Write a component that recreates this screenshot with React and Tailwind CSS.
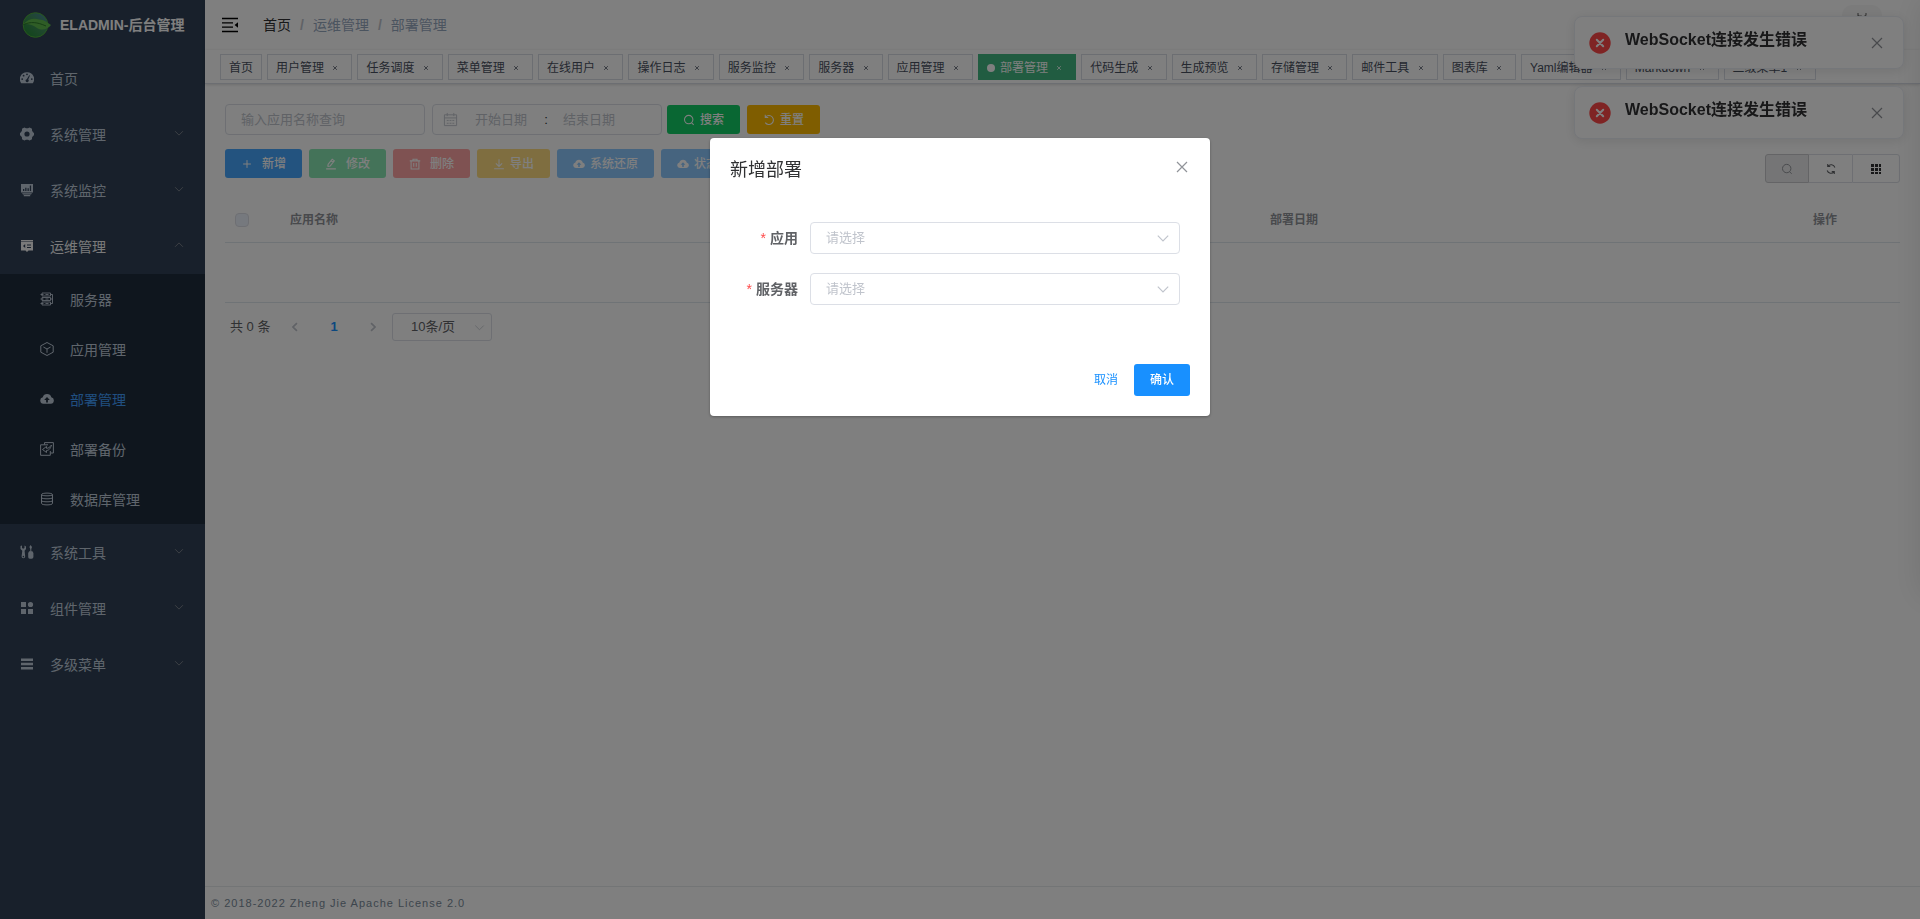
import React, { useState } from 'react';
import { Plus } from 'lucide-react';

const LogoIcon = () => (
  <svg viewBox="0 0 30 28" className="w-[30px] h-7 shrink-0">
    <defs>
      <linearGradient id="logo" x1="0" y1="1" x2="1" y2="0">
        <stop offset="0" stopColor="#1f8a2e" />
        <stop offset="0.55" stopColor="#3f8f5c" />
        <stop offset="1" stopColor="#4a86a8" />
      </linearGradient>
    </defs>
    <circle cx="13.5" cy="14" r="12.3" fill="url(#logo)" stroke="#4fae3a" strokeWidth="1" />
    <path d="M1.5 13C6 8 12 6.5 17 8.5C22 8.5 25 11.5 29 14C25.5 18.5 20 20 15 17C11 13.5 6 12.5 1.5 13Z" fill="#5fba4c" />
    <path d="M1.5 13.5C9 10.5 15 11 24 15" fill="none" stroke="#2d7d2b" strokeWidth="1" />
  </svg>
);

const HamburgerIcon = () => (
  <svg viewBox="0 0 16 16" className="w-4 h-4">
    <path d="M0 1.5h16M0 5.8h11M0 10.2h11M0 14.5h16" stroke="#000" strokeWidth="1.3" />
    <path d="M16 5.2v5.6L12.6 8z" fill="#000" />
  </svg>
);

// thin line icons on a 16px grid, coloured by the text colour
const linePaths = {
  down: 'M2.8 5.6L8 10.8L13.2 5.6',
  up: 'M2.8 10.4L8 5.2L13.2 10.4',
  left: 'M10.2 3.5L5.7 8L10.2 12.5',
  right: 'M5.8 3.5L10.3 8L5.8 12.5',
  close: 'M3 3L13 13M13 3L3 13',
  search: 'M7.6 1.8a5.6 5.6 0 1 0 0 11.2a5.6 5.6 0 1 0 0-11.2M11.4 11.6L14.2 14.4',
  edit: 'M3.6 11.4L4.2 8.4L9.6 1.6L12.4 3.8L7 10.6L3.6 11.4M8.2 3.6L10.9 5.7M1.5 14.5H14.5',
  trash: 'M1 3.8h14M5.3 3.6v-2h5.4v2M2.8 4v10.6h10.4V4M6.3 6.8v5M9.7 6.8v5',
  download: 'M8 1.5V11M3.8 7.2L8 11.2L12.2 7.2M1.5 14.2H14.5',
  reset: 'M3.6 3.8A6 6 0 1 1 3 11.5M3 1v3.6H7',
  refresh: 'M13.2 6A5.6 5.6 0 0 0 3.8 4.2M2.8 10A5.6 5.6 0 0 0 12.2 11.8M3.6 1.2v3.3H7M12.4 14.8v-3.3H9',
  calendar: 'M1.5 3h13v11.5h-13zM1.5 6.3h13M4.5 1v3.4M11.5 1v3.4M4 9h2M7 9h2M10 9h2M4 12h2M7 12h2M10 12h2',
};

const LineIcon = ({ name, width = 1, className = 'w-4 h-4' }) => (
  <svg viewBox="0 0 16 16" className={`shrink-0 ${className}`} fill="none" stroke="currentColor" strokeWidth={width}>
    <path d={linePaths[name]} />
  </svg>
);

const CloudIcon = ({ className }) => (
  <svg viewBox="0 0 14 14" className={className}>
    <path
      fill="currentColor"
      fillRule="evenodd"
      d="M11.3 5.2A4.4 4.4 0 0 0 2.8 5.2A3.3 3.3 0 0 0 3.3 11.7H10.8A3.3 3.3 0 0 0 11.3 5.2ZM7 5L9.8 7.9H7.9V10.4H6.1V7.9H4.2Z"
    />
  </svg>
);

const GridIcon = () => (
  <svg viewBox="0 0 12 12" className="w-3 h-3" fill="currentColor">
    <path d="M1 1h3v3H1zM5 1h3v3H5zM9 1h2v3H9zM1 5h3v3H1zM5 5h3v3H5zM9 5h2v3H9zM1 9h3v2H1zM5 9h3v2H5zM9 9h2v2H9z" />
  </svg>
);

const menuIcons = {
  home: <path fillRule="evenodd" d="M7 1.2A6.9 6.9 0 0 0 1.2 12.2H12.8A6.9 6.9 0 0 0 7 1.2ZM7 2.4a.9.9 0 1 1 0 1.8a.9.9 0 0 1 0-1.8ZM3.6 3.8a.9.9 0 1 1 0 1.8a.9.9 0 0 1 0-1.8ZM2.2 7.2a.9.9 0 1 1 0 1.8a.9.9 0 0 1 0-1.8ZM11.8 7.2a.9.9 0 1 1 0 1.8a.9.9 0 0 1 0-1.8ZM9.2 4.2L10 4.6L8.2 8.6A1.5 1.5 0 1 1 6.8 8.2Z" />,
  gear: <path fillRule="evenodd" d="M4.4 .4L6 1.3H8L9.6 .4L12 1.8V3.6L13 5.3L14 6V8.2L13 8.9L12 10.5V12.3L9.6 13.6L8 12.8H6L4.4 13.6L2 12.3V10.5L1 8.9L0 8.2V6L1 5.3L2 3.6V1.8ZM7 4.4a2.6 2.6 0 1 0 0 5.2a2.6 2.6 0 0 0 0-5.2Z" />,
  monitor: <path fillRule="evenodd" d="M1 1H13V9.6H1ZM3 6V8H4.3V6ZM5.2 4.8V8H6.5V4.8ZM7.5 5.3V8H8.8V5.3ZM9.8 2.6V8H11.1V2.6ZM2 10.3H12L11 11.5H3ZM3.8 12H10.2V13.2H3.8Z" />,
  ops: <path fillRule="evenodd" d="M1 1H13V2.4H1ZM1 3H13V11.6H8.5L7 13L5.5 11.6H1ZM5.2 5L3 7L5.2 9ZM7 5.4V6.4H11V5.4ZM7 8V9H11V8Z" />,
  tools: <path fillRule="evenodd" d="M.5 1L2 .6V3L3.2 3.8L4.5 3V.6L6 1.6V4L4.6 5.8L5.2 11.5A1.8 1.8 0 1 1 1.6 11.5L2.3 5.8L.5 4ZM3.4 10.8a.8.8 0 1 0 0 1.6a.8.8 0 0 0 0-1.6ZM10.5 0L12 2L11.3 4V6.2H12.4L13.4 8V12Q13.4 13.8 11.6 13.8H9.8Q8.2 13.8 8.2 12V8L9.2 6.2H10.3V4L9.4 2Z" />,
  grid: <path d="M1 1H6V6H1ZM1 8H6V13H1ZM8 8H13V13H8ZM10.5 .9a2.6 2.6 0 1 1 0 5.2a2.6 2.6 0 0 1 0-5.2Z" />,
  list: <path d="M1 1.5H13V4H1ZM1 5.8H13V8.3H1ZM1 10.1H13V12.6H1Z" />,
  server: (
    <g fill="none" stroke="currentColor" strokeWidth="0.9">
      <path d="M2 1h8.5v3H2zM2 5.5h8.5v3H2zM2 10h8.5v3H2zM.5 2.5h3M.5 7h3M.5 11.5h3M10.5 2.5h2v9h-2M10.5 7h2M5.5 2.5h3M5.5 7h3M5.5 11.5h3" />
    </g>
  ),
  cube: (
    <g fill="none" stroke="currentColor" strokeWidth="1">
      <path d="M7 .5L13.2 3.8V10.2L7 13.5L.8 10.2V3.8ZM3.4 5L7 7L10.6 5M7 7V10.8" />
    </g>
  ),
  backup: (
    <g fill="none" stroke="currentColor" strokeWidth="1">
      <path d="M4.5 2.6V.6H13.4V11H10.5M.6 2.8H8M.6 2.8V13.3H10.3V9M6.5 4.5L2.5 7.5L6.5 10.5V8.5C8.5 8.5 10.5 7 11.5 3C9.5 5.5 8.5 6.3 6.5 6.3Z" />
    </g>
  ),
  database: (
    <g fill="none" stroke="currentColor" strokeWidth="1">
      <path d="M1.5 2.6C1.5 .6 12.5 .6 12.5 2.6V11.4C12.5 13.4 1.5 13.4 1.5 11.4ZM1.5 2.6C1.5 4.2 12.5 4.2 12.5 2.6M1.5 5.6C1.5 7.2 12.5 7.2 12.5 5.6M1.5 8.6C1.5 10.2 12.5 10.2 12.5 8.6" />
    </g>
  ),
};

const MenuIcon = ({ name }) => {
  if (name === 'cloud') return <CloudIcon className="w-[14px] h-[14px] shrink-0" />;
  return (
    <svg viewBox="0 0 14 14" className="w-[14px] h-[14px] shrink-0" fill="currentColor">
      {menuIcons[name]}
    </svg>
  );
};

const menus = [
  { title: '首页', icon: 'home', link: true },
  { title: '系统管理', icon: 'gear' },
  { title: '系统监控', icon: 'monitor' },
  {
    title: '运维管理',
    icon: 'ops',
    children: [
      { title: '服务器', icon: 'server' },
      { title: '应用管理', icon: 'cube' },
      { title: '部署管理', icon: 'cloud', active: true },
      { title: '部署备份', icon: 'backup' },
      { title: '数据库管理', icon: 'database' },
    ],
  },
  { title: '系统工具', icon: 'tools' },
  { title: '组件管理', icon: 'grid' },
  { title: '多级菜单', icon: 'list' },
];

const tags = [
  '首页', '用户管理', '任务调度', '菜单管理', '在线用户', '操作日志',
  '服务监控', '服务器', '应用管理', '部署管理', '代码生成', '生成预览',
  '存储管理', '邮件工具', '图表库', 'Yaml编辑器', 'Markdown', '三级菜单1',
];

const Sidebar = () => (
  <aside className="w-[205px] shrink-0 bg-[#304156] text-sm text-[#bfcbd9]">
    <a href="#" className="flex items-center h-[50px] pl-[22px] gap-2 font-semibold text-white whitespace-nowrap">
      <LogoIcon />
      <span>ELADMIN-后台管理</span>
    </a>
    <nav>
      {menus.map((menu) => (
        <div key={menu.title}>
          <a href="#" className={`flex items-center h-14 px-5 gap-4 ${menu.children ? 'text-[#f4f4f5]' : ''}`}>
            <MenuIcon name={menu.icon} />
            <span className="flex-1 pt-0.5">{menu.title}</span>
            {!menu.link && (
              <LineIcon name={menu.children ? 'up' : 'down'} className="w-3 h-3 mb-0.5 text-[#909399]" />
            )}
          </a>
          {menu.children && (
            <div className="bg-[#1f2d3d]">
              {menu.children.map((child) => (
                <a key={child.title} href="#" className="flex items-center h-[50px] pl-10 gap-4">
                  <MenuIcon name={child.icon} />
                  <span className={`pt-0.5 ${child.active ? 'text-[#409eff]' : ''}`}>{child.title}</span>
                </a>
              ))}
            </div>
          )}
        </div>
      ))}
    </nav>
  </aside>
);

const Navbar = () => (
  <header className="flex items-center h-[50px] px-[17px] bg-white shadow-[0_1px_4px_rgba(0,21,41,0.08)]">
    <button aria-label="toggle sidebar"><HamburgerIcon /></button>
    <nav className="flex items-center ml-[25px] text-sm text-[#97a8be]">
      <a href="#" className="text-[#303133]">首页</a>
      <span className="mx-[9px] font-bold text-[#c0c4cc]">/</span>
      <span>运维管理</span>
      <span className="mx-[9px] font-bold text-[#c0c4cc]">/</span>
      <span>部署管理</span>
    </nav>
    <div className="ml-auto mr-[21px] w-10 h-10 rounded-[10px] bg-[#f6f6f6] flex items-start justify-center pt-2">
      <svg viewBox="0 0 14 14" className="w-[14px] h-[14px]" fill="none" stroke="#777" strokeWidth="1.2">
        <path d="M3 0v4l3-1l2 2l3-3V0M3 2l3 3" />
      </svg>
    </div>
  </header>
);

const TagsView = () => (
  <div className="h-[34px] pl-[10px] bg-white border-b border-[#d8dce5] whitespace-nowrap text-[0px] shadow-[0_1px_3px_rgba(0,0,0,0.12),0_0_3px_rgba(0,0,0,0.04)]">
    {tags.map((tag, i) => (
      <a
        key={tag}
        href="#"
        className={`inline-block h-[26px] leading-[26px] px-2 ml-[5px] mt-1 border text-xs ${tag === '部署管理' ? 'bg-[#42b983] text-white border-[#42b983]' : 'bg-white text-[#495060] border-[#d8dce5]'}`}
      >
        {tag === '部署管理' && <span className="inline-block w-2 h-2 mr-[5px] rounded-full bg-white" />}
        {tag}{' '}
        {i > 0 && <LineIcon name="close" width={2} className="inline-block w-4 h-4 p-[5px] align-[-4px]" />}
      </a>
    ))}
  </div>
);

const ActionButton = ({ icon, label, color, wide, disabled }) => (
  <button
    disabled={disabled}
    className={`flex items-center h-[29px] px-4 rounded-[3px] text-xs font-medium text-white whitespace-nowrap ${wide ? 'gap-[9px]' : 'gap-[5px]'} ${color}`}
  >
    {icon}
    <span>{label}</span>
  </button>
);

const Filters = () => (
  <div className="flex items-center text-[13px]">
    <input
      aria-label="应用名称"
      placeholder="输入应用名称查询"
      className="w-[200px] h-[31px] px-[15px] mr-[7px] border border-[#dcdfe6] rounded placeholder:text-[#c0c4cc]"
    />
    <div className="flex items-center w-[230px] h-[31px] px-[10px] mr-[5px] border border-[#dcdfe6] rounded">
      <LineIcon name="calendar" className="w-[15px] h-[15px] mr-[6px] text-[#c0c4cc]" />
      <input aria-label="开始日期" placeholder="开始日期" className="w-[74px] text-center placeholder:text-[#c0c4cc]" />
      <span className="w-4 text-center text-[#303133]">:</span>
      <input aria-label="结束日期" placeholder="结束日期" className="w-[70px] text-center placeholder:text-[#c0c4cc]" />
    </div>
    <div className="flex gap-[7px]">
      <ActionButton icon={<LineIcon name="search" width={1.4} className="w-3 h-3" />} label="搜索" color="bg-[#13ce66]" />
      <ActionButton icon={<LineIcon name="reset" width={1.4} className="w-3 h-3" />} label="重置" color="bg-[#ffba00]" />
    </div>
  </div>
);

const Toolbar = () => (
  <div className="flex items-start mt-[14px]">
    <div className="flex gap-[7px]">
      <ActionButton wide icon={<Plus size={12} strokeWidth={2} />} label="新增" color="bg-[#46a6ff]" />
      <ActionButton disabled wide icon={<LineIcon name="edit" width={1.4} className="w-3 h-3" />} label="修改" color="bg-[#89e6b3]" />
      <ActionButton disabled wide icon={<LineIcon name="trash" width={1.4} className="w-3 h-3" />} label="删除" color="bg-[#ffa4a4]" />
      <ActionButton disabled icon={<LineIcon name="download" width={1.4} className="w-3 h-3" />} label="导出" color="bg-[#ffdd80]" />
      <ActionButton disabled icon={<CloudIcon className="w-3 h-3" />} label="系统还原" color="bg-[#8cc8ff]" />
      <ActionButton disabled icon={<CloudIcon className="w-3 h-3" />} label="状态查询" color="bg-[#8cc8ff]" />
    </div>
    <div className="flex ml-auto mt-[5px] text-[#606266]">
      <button aria-label="搜索" className="flex items-center justify-center w-11 h-[29px] border border-[#c8c9cc] bg-[#ebebec] rounded-l-[3px] text-[#909399]">
        <LineIcon name="search" width={1.3} className="w-3 h-3" />
      </button>
      <button aria-label="刷新" className="flex items-center justify-center w-[43px] h-[29px] border-y border-[#dcdfe6]">
        <LineIcon name="refresh" width={1.4} className="w-3 h-3" />
      </button>
      <button aria-label="列设置" className="flex items-center justify-center w-12 h-[29px] border border-[#dcdfe6] rounded-r-[3px] text-[#303133]">
        <GridIcon />
      </button>
    </div>
  </div>
);

const Pagination = () => (
  <div className="flex items-center mt-[10px] px-[5px] text-[13px] text-[#606266]">
    <span className="w-[50px]">共 0 条</span>
    <button aria-label="上一页" className="flex justify-center w-[30px] text-[#c0c4cc]">
      <LineIcon name="left" width={2} className="w-[14px] h-[14px]" />
    </button>
    <button className="w-12 font-bold text-[#1890ff]">1</button>
    <button aria-label="下一页" className="flex justify-center w-[30px] text-[#c0c4cc]">
      <LineIcon name="right" width={2} className="w-[14px] h-[14px]" />
    </button>
    <div className="relative ml-1">
      <select aria-label="每页条数" className="appearance-none w-[100px] h-7 pl-[18px] border border-[#dcdfe6] rounded-[3px]">
        <option>10条/页</option>
      </select>
      <LineIcon name="down" className="absolute right-[6px] top-2 w-[13px] h-[13px] text-[#c0c4cc] pointer-events-none" />
    </div>
  </div>
);

const Notification = ({ onClose }) => (
  <div className="flex items-start w-[330px] h-[53px] pl-[14px] pr-[18px] bg-white border border-[#ebeef5] rounded-lg shadow-[0_2px_12px_rgba(0,0,0,0.1)]">
    <svg viewBox="0 0 22 22" className="w-[22px] h-[22px] mt-[15px]">
      <circle cx="11" cy="11" r="10.7" fill="#ff4949" />
      <path d="M7.8 7.8l6.4 6.4M14.2 7.8l-6.4 6.4" stroke="#fff" strokeWidth="2" strokeLinecap="round" />
    </svg>
    <h2 className="ml-[14px] mt-[11px] text-base font-bold text-[#303133]">WebSocket连接发生错误</h2>
    <button aria-label="关闭" onClick={onClose} className="ml-auto mt-[18px] text-[#909399]">
      <LineIcon name="close" width={1.2} />
    </button>
  </div>
);

const SelectField = ({ id, label }) => (
  <div className="flex items-center mb-[19px]">
    <label htmlFor={id} className="w-20 pr-3 text-right text-sm font-bold text-[#606266]">
      <span className="mr-1 font-normal text-[#ff4949]">*</span>
      {label}
    </label>
    <div className="relative w-[370px]">
      <select id={id} className="appearance-none w-full h-8 px-[15px] border border-[#dcdfe6] rounded text-[13px] text-[#c0c4cc] bg-white">
        <option>请选择</option>
      </select>
      <LineIcon name="down" width={1.2} className="absolute right-[9px] top-2 w-4 h-4 text-[#c0c4cc] pointer-events-none" />
    </div>
  </div>
);

const DeployDialog = ({ onClose }) => (
  <div className="fixed inset-0 bg-black/50">
    <div role="dialog" aria-label="新增部署" className="w-[500px] mt-[15vh] mx-auto bg-white rounded-sm shadow-[0_1px_3px_rgba(0,0,0,0.3)]">
      <div className="flex items-center justify-between p-5 pb-[10px]">
        <h1 className="text-lg leading-6 text-[#303133]">新增部署</h1>
        <button aria-label="关闭" onClick={onClose} className="text-[#909399] pb-1.5">
          <LineIcon name="close" width={1.2} />
        </button>
      </div>
      <form className="px-5 pt-[30px] pb-[30px]">
        <SelectField id="app" label="应用" />
        <SelectField id="server" label="服务器" />
      </form>
      <div className="flex justify-end gap-4 px-5 pt-[10px] pb-5 text-xs">
        <button onClick={onClose} className="text-[#1890ff]">取消</button>
        <button className="w-14 h-8 rounded-[3px] bg-[#1890ff] font-medium text-white">确认</button>
      </div>
    </div>
  </div>
);

const App = () => {
  const [dialogOpen, setDialogOpen] = useState(true);
  const [notices, setNotices] = useState([1, 2]);

  return (
    <div className="flex min-h-screen bg-white font-['Liberation_Sans','Noto_Sans_CJK_SC',sans-serif]">
      <Sidebar />
      <div className="flex flex-col flex-1 min-w-0">
        <Navbar />
        <TagsView />
        <main className="flex-1 p-5">
          <Filters />
          <Toolbar />
          <table className="w-full table-fixed mt-4 text-xs text-left text-[#909399]">
            <thead>
              <tr className="h-[43px] border-b border-[#dfe6ec]">
                <th className="w-[55px] pl-[10px]">
                  <input
                    type="checkbox"
                    disabled
                    aria-label="全选"
                    className="block appearance-none w-[14px] h-[14px] border border-[#dcdfe6] rounded-sm bg-[#edf2fc]"
                  />
                </th>
                <th className="px-[10px]">应用名称</th>
                <th className="px-[10px]">服务器</th>
                <th className="px-[10px]">部署日期</th>
                <th className="w-[150px] px-[10px] text-center">操作</th>
              </tr>
            </thead>
            <tbody>
              <tr className="h-[60px] border-b border-[#dfe6ec]">
                <td colSpan={5} />
              </tr>
            </tbody>
          </table>
          <Pagination />
        </main>
        <footer className="h-[33px] px-[6px] border-t border-[#e7eaec] text-[11px] leading-8 tracking-[1px] text-[#7a8b9a]">
          © 2018-2022 Zheng Jie Apache License 2.0
        </footer>
      </div>

      {/* settings drawer, closed: only its shadow reaches the page */}
      <div className="fixed top-0 right-0 w-[260px] h-[65vh] translate-x-full bg-white shadow-[0_0_30px_rgba(0,0,0,0.1)]" />

      <div className="fixed top-4 right-4 flex flex-col gap-[17px]">
        {notices.map((id) => (
          <Notification key={id} onClose={() => setNotices(notices.filter((n) => n !== id))} />
        ))}
      </div>
      {dialogOpen && <DeployDialog onClose={() => setDialogOpen(false)} />}
    </div>
  );
};

export default App;
